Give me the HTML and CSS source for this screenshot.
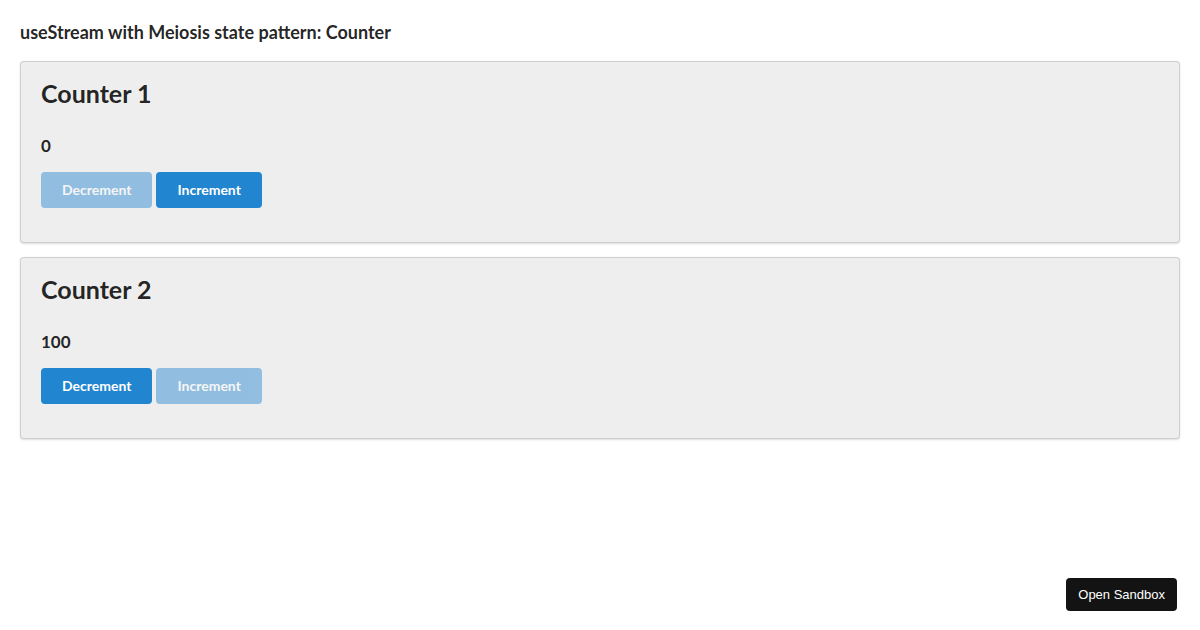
FILE: index.html
```html
<!DOCTYPE html>
<html lang="en">
<head>
<meta charset="UTF-8">
<meta name="viewport" content="width=device-width, initial-scale=1.0">
<title>useStream with Meiosis state pattern: Counter</title>
<link rel="stylesheet" href="styles.css">
</head>
<body>
<div id="app">
    <h3 class="page-title">useStream with Meiosis state pattern: Counter</h3>
    <div class="segment">
        <h2>Counter 1</h2>
        <p class="count">0</p>
        <div class="buttons">
            <button class="btn" disabled>Decrement</button>
            <button class="btn">Increment</button>
        </div>
    </div>
    <div class="segment">
        <h2>Counter 2</h2>
        <p class="count">100</p>
        <div class="buttons">
            <button class="btn">Decrement</button>
            <button class="btn" disabled>Increment</button>
        </div>
    </div>
</div>
<a class="sandbox" href="#">Open Sandbox</a>
</body>
</html>
```

FILE: styles.css
```css
body {
    font-family: Lato, "Helvetica Neue", Arial, sans-serif;
    font-size: 14px;
    color: rgba(0, 0, 0, 0.87);
    background-color: #fff;
    margin: 0;
    padding: 20px;
}
#app {
    display: flex;
    flex-direction: column;
    gap: 14px;
}
.page-title {
    font-size: 18px;
    font-weight: 700;
    margin: 1px 0 4px;
    line-height: 22px;
}
.segment {
    background-color: #eee;
    border: 1px solid rgba(34, 36, 38, 0.15);
    border-radius: 4px;
    box-shadow: 0 1px 2px 0 rgba(34, 36, 38, 0.15);
    padding: 20px 20px 34px;
}
h2 {
    font-size: 25px;
    font-weight: 700;
    line-height: 26px;
    margin: -2px 0 30px;
}
.count {
    font-size: 17px;
    font-weight: 700;
    line-height: 20px;
    margin: 0 0 16px;
}
.buttons {
    display: flex;
    gap: 4px;
}
.btn {
    font-family: Lato, "Helvetica Neue", Arial, sans-serif;
    font-size: 14px;
    font-weight: 700;
    line-height: 14px;
    padding: 11px 21px;
    border: none;
    border-radius: 4px;
    background-color: #2185d0;
    color: #fff;
    cursor: pointer;
}
.btn:disabled {
    opacity: 0.45;
    cursor: default;
}
.sandbox {
    position: fixed;
    right: 23px;
    bottom: 19px;
    background-color: #131313;
    color: #fff;
    font-family: "Liberation Sans", Arial, sans-serif;
    font-size: 13px;
    line-height: 15px;
    padding: 9px 12px;
    border-radius: 4px;
    text-decoration: none;
}
```
